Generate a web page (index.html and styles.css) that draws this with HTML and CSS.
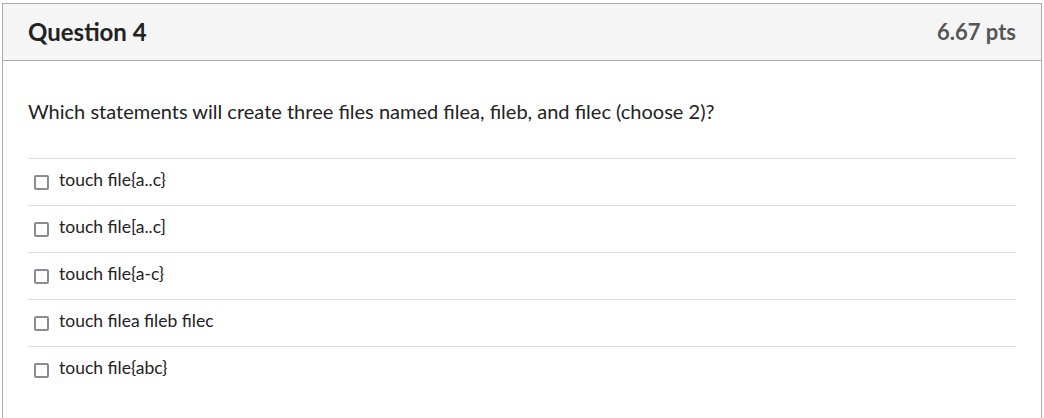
FILE: index.html
```html
<!DOCTYPE html>
<html>
<head>
<meta charset="utf-8">
<link rel="stylesheet" href="styles.css">
</head>
<body>
<div class="question">
  <div class="header">
    <h2 class="title">Question 4</h2>
    <div class="points">6.67 pts</div>
  </div>
  <div class="body">
    <p class="text">Which statements will create three files named filea, fileb, and filec (choose 2)?</p>
    <div class="answers">
      <label class="answer"><span class="box"></span><span>touch file{a..c}</span></label>
      <label class="answer"><span class="box"></span><span>touch file[a..c]</span></label>
      <label class="answer"><span class="box"></span><span>touch file{a-c}</span></label>
      <label class="answer"><span class="box"></span><span>touch filea fileb filec</span></label>
      <label class="answer"><span class="box"></span><span>touch file{abc}</span></label>
    </div>
  </div>
</div>
</body>
</html>
```
FILE: styles.css
```css
html, body {
  margin: 0;
  padding: 0;
  background: #fff;
}
body {
  padding: 3px 2px 0 2px;
  font-family: Lato, "Open Sans", sans-serif;
  color: #2d3b45;
}
.question {
  border: 1px solid #aaa;
  border-bottom: none;
  height: 420px;
}
.header {
  background: #f5f5f5;
  border-bottom: 1px solid #aaa;
  height: 56px;
  display: flex;
  align-items: center;
  justify-content: space-between;
  padding: 0 25px;
}
.title {
  margin: -2px 0 0 0;
  font-size: 24px;
  font-weight: 700;
  color: #222;
}
.points {
  margin-top: -2px;
  font-size: 22px;
  font-weight: 700;
  color: #555;
}
.body {
  padding: 0 25px;
}
.text {
  margin: 37px 0 0 0;
  font-size: 20px;
  line-height: 26px;
  color: #222;
}
.answers {
  margin-top: 34px;
}
.answer {
  display: flex;
  align-items: center;
  border-top: 1px solid #ddd;
  padding-bottom: 5px;
  box-sizing: border-box;
  height: 47px;
  font-size: 17.5px;
  color: #222;
}
.box {
  width: 11px;
  height: 11px;
  border: 2px solid #8b8b96;
  border-radius: 2px;
  margin: 5px 10px 0 6px;
}
```
